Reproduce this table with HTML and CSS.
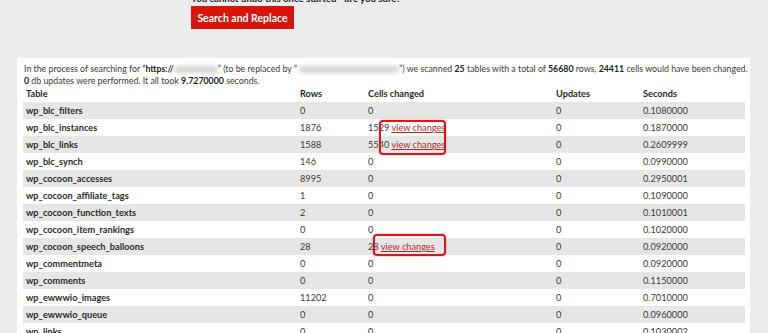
FILE: index.html
```html
<!DOCTYPE html>
<html>
<head>
<meta charset="utf-8">
<link rel="stylesheet" href="styles.css">
</head>
<body>
<div class="top">
  <p class="warn">You cannot undo this once started - are you sure?</p>
  <button class="btn">Search and Replace</button>
</div>
<div class="panel">
  <p class="summary">In the process of searching for “<b>https://</b><span class="blur b1"></span>” (to be replaced by “<span class="blur b2"></span>”) we scanned <b>25</b> tables with a total of <b>56680</b> rows, <b>24411</b> cells would have been changed.<br><b>0</b> db updates were performed. It all took <b>9.7270000</b> seconds.</p>
  <table class="results">
    <colgroup>
      <col class="c1"><col class="c2"><col class="c3"><col class="c4"><col class="c5">
    </colgroup>
    <thead>
      <tr><th>Table</th><th>Rows</th><th>Cells changed</th><th>Updates</th><th>Seconds</th></tr>
    </thead>
    <tbody>
      <tr><td class="name">wp_blc_filters</td><td>0</td><td>0</td><td>0</td><td>0.1080000</td></tr>
      <tr><td class="name">wp_blc_instances</td><td>1876</td><td class="cc"><span class="hl hl-a"></span>1529 <a href="#">view changes</a></td><td>0</td><td>0.1870000</td></tr>
      <tr><td class="name">wp_blc_links</td><td>1588</td><td>5540 <a href="#">view changes</a></td><td>0</td><td>0.2609999</td></tr>
      <tr><td class="name">wp_blc_synch</td><td>146</td><td>0</td><td>0</td><td>0.0990000</td></tr>
      <tr><td class="name">wp_cocoon_accesses</td><td>8995</td><td>0</td><td>0</td><td>0.2950001</td></tr>
      <tr><td class="name">wp_cocoon_affiliate_tags</td><td>1</td><td>0</td><td>0</td><td>0.1090000</td></tr>
      <tr><td class="name">wp_cocoon_function_texts</td><td>2</td><td>0</td><td>0</td><td>0.1010001</td></tr>
      <tr><td class="name">wp_cocoon_item_rankings</td><td>0</td><td>0</td><td>0</td><td>0.1020000</td></tr>
      <tr><td class="name">wp_cocoon_speech_balloons</td><td>28</td><td class="cc"><span class="hl hl-b"></span>28 <a href="#">view changes</a></td><td>0</td><td>0.0920000</td></tr>
      <tr><td class="name">wp_commentmeta</td><td>0</td><td>0</td><td>0</td><td>0.0920000</td></tr>
      <tr><td class="name">wp_comments</td><td>0</td><td>0</td><td>0</td><td>0.1150000</td></tr>
      <tr><td class="name">wp_ewwwio_images</td><td>11202</td><td>0</td><td>0</td><td>0.7010000</td></tr>
      <tr><td class="name">wp_ewwwio_queue</td><td>0</td><td>0</td><td>0</td><td>0.0960000</td></tr>
      <tr><td class="name">wp_links</td><td>0</td><td>0</td><td>0</td><td>0.1030002</td></tr>
    </tbody>
  </table>
</div>
</body>
</html>
```
FILE: styles.css
```css
html, body {
  margin: 0;
  padding: 0;
  background: #ececec;
  font-family: Lato, "Open Sans", sans-serif;
  color: #3a3a3a;
  overflow: hidden;
}
.top {
  padding-left: 191px;
  margin-top: -7px;
  height: 65px;
}
.warn {
  margin: 0;
  font-size: 9.6px;
  font-weight: bold;
  line-height: 11px;
  color: #222;
  white-space: nowrap;
}
.btn {
  display: block;
  margin-top: 2px;
  width: 103px;
  height: 23px;
  border: none;
  background: #d7150b;
  color: #fff;
  font-family: Lato, "Open Sans", sans-serif;
  font-weight: bold;
  font-size: 10.5px;
  padding: 0;
  cursor: pointer;
}
.panel {
  margin-left: 17px;
  width: 733px;
  background: #fff;
  padding: 5px 0 0 6px;
  box-sizing: border-box;
  min-height: 300px;
}
.summary {
  margin: 0;
  padding-left: 1px;
  font-size: 8.8px;
  line-height: 12px;
  white-space: nowrap;
}
.summary b { color: #222; }
.blur {
  display: inline-block;
  height: 7px;
  vertical-align: middle;
  background: #d4d4d4;
  border-radius: 4px;
  filter: blur(2px);
}
.b1 { width: 44px; }
.b2 { width: 100px; margin-left: 2px; }
.results {
  border-collapse: collapse;
  width: 722px;
  table-layout: fixed;
  margin-top: -2px;
  font-size: 9.2px;
}
.c1 { width: 274px; }
.c2 { width: 68px; }
.c3 { width: 188px; }
.c4 { width: 87px; }
.c5 { width: 105px; }
.results th, .results td {
  height: 17px;
  padding: 0 0 0 3px;
  text-align: left;
  white-space: nowrap;
}
.results th { font-weight: bold; color: #2a2a2a; }
.results tbody tr:nth-child(odd) { background: #e6e6e6; }
.results td.name { font-weight: bold; color: #2a2a2a; }
.results a { color: #b02a2a; }
.cc { position: relative; }
.hl {
  position: absolute;
  border: 2px solid #d8161b;
  border-radius: 4px;
  box-shadow: 0 0 2px rgba(200, 20, 20, 0.5);
  pointer-events: none;
}
.hl-a { left: 14px; top: 1px; width: 63px; height: 31px; }
.hl-b { left: 8px; top: -4px; width: 69px; height: 18px; }
```
